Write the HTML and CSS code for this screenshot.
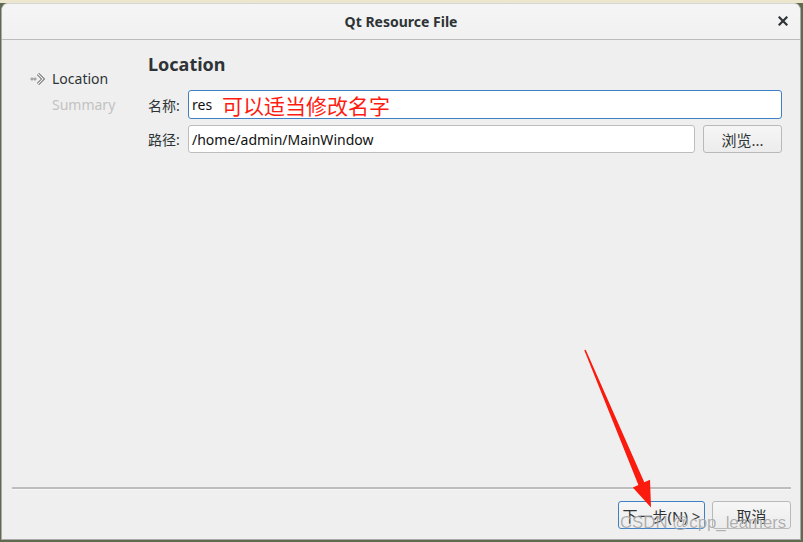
FILE: index.html
```html
<!DOCTYPE html>
<html>
<head>
<meta charset="utf-8">
<link rel="stylesheet" href="styles.css">
</head>
<body>
<div class="window">
  <div class="titlebar">
    <span class="title">Qt Resource File</span>
    <svg class="close" width="10" height="10" viewBox="0 0 10 10"><path d="M1.5 1.5 L8.5 8.5 M8.5 1.5 L1.5 8.5" stroke="#2e3436" stroke-width="2.2" stroke-linecap="square"/></svg>
  </div>
  <div class="body">
    <div class="content">
      <nav class="nav">
        <div class="nav-item current">
          <svg class="nav-icon" width="16" height="12" viewBox="0 0 16 12">
            <circle cx="2" cy="6" r="1.1" fill="none" stroke="#777" stroke-width="0.8"/>
            <circle cx="5" cy="6" r="1.1" fill="none" stroke="#777" stroke-width="0.8"/>
            <path d="M8 1 L13 6 L8 11" fill="none" stroke="#666" stroke-width="3"/>
            <path d="M8 1 L13 6 L8 11" fill="none" stroke="#efefef" stroke-width="1.2"/>
          </svg>
          <span>Location</span>
        </div>
        <div class="nav-item pending"><span>Summary</span></div>
      </nav>
      <main class="main">
        <h1 class="heading">Location</h1>
        <div class="form-row">
          <label class="label">名称:</label>
          <div class="input focused"><span>res</span><span class="note">可以适当修改名字</span></div>
        </div>
        <div class="form-row">
          <label class="label">路径:</label>
          <div class="input"><span>/home/admin/MainWindow</span></div>
          <button class="btn browse">浏览...</button>
        </div>
      </main>
    </div>
    <div class="footer">
      <div class="separator"></div>
      <div class="buttons">
        <button class="btn default">下一步(N) &gt;</button>
        <button class="btn cancel">取消</button>
      </div>
    </div>
  </div>
</div>
<svg class="arrow" width="803" height="542" viewBox="0 0 803 542">
  <polygon points="584.3,350.3 585.7,349.7 644.3,482.3 650,479.8 651,507.5 632.8,487.5 638.4,484.9" fill="#fa1a0e"/>
</svg>
<div class="watermark">CSDN @cpp_learners</div>
</body>
</html>
```
FILE: styles.css
```css
html, body {
  margin: 0;
  padding: 0;
}
body {
  width: 803px;
  height: 542px;
  background: #5e6b4e;
  position: relative;
  overflow: hidden;
  font-family: "Noto Sans", "Noto Sans CJK SC", sans-serif;
  color: #2e3436;
}
body::before {
  content: "";
  display: block;
  height: 3px;
  background: #ece6cf;
}
.window {
  margin-left: 1px;
  width: 800px;
  height: 537px;
  box-sizing: border-box;
  border: 1px solid #a9a9a9;
  border-top-color: #d6d6d6;
  border-radius: 7px 7px 0 0;
  background: #efefef;
  display: flex;
  flex-direction: column;
  overflow: hidden;
}
.titlebar {
  height: 35px;
  flex: none;
  border-bottom: 1px solid #bcbcbc;
  background: linear-gradient(#f5f5f5, #f1f1f1);
  display: flex;
  align-items: center;
  justify-content: center;
  position: relative;
}
.title {
  font-size: 14px;
  font-weight: bold;
  color: #2e3436;
}
.close {
  position: absolute;
  right: 12px;
  top: 12px;
}
.body {
  flex: 1;
  display: flex;
  flex-direction: column;
}
.content {
  flex: 1;
  display: flex;
}
.nav {
  width: 146px;
  flex: none;
  padding-top: 26px;
  padding-left: 28px;
  box-sizing: border-box;
}
.nav-item {
  height: 26px;
  display: flex;
  align-items: center;
  font-size: 14px;
  line-height: 20px;
}
.nav-item span {
  margin-left: 22px;
}
.nav-item.current span {
  margin-left: 6px;
  color: #2e3436;
}
.nav-icon {
  flex: none;
}
.nav-item.pending span {
  color: #c2c2c2;
}
.main {
  flex: 1;
  padding: 12px 18px 0 0;
}
.heading {
  margin: 0 0 14px 0;
  font-size: 18px;
  line-height: 24px;
  font-weight: bold;
  color: #2e3436;
}
.form-row {
  display: flex;
  align-items: center;
  margin-bottom: 6px;
}
.label {
  width: 40px;
  flex: none;
  font-size: 14px;
  color: #2e3436;
}
.input {
  flex: 1;
  height: 28px;
  box-sizing: border-box;
  border: 1px solid #bdbdbd;
  border-radius: 3px;
  background: #ffffff;
  display: flex;
  align-items: center;
  padding-left: 3px;
  font-size: 14px;
  color: #111;
}
.input.focused {
  border-color: #3f7fc3;
  height: 29px;
}
.note {
  color: #ff1b10;
  font-size: 21px;
  margin-left: 10px;
  font-family: "Noto Sans CJK SC", sans-serif;
  line-height: 26px;
}
.btn {
  height: 28px;
  box-sizing: border-box;
  border: 1px solid #b9b9b9;
  border-radius: 3px;
  background: linear-gradient(#f6f6f6, #ececec);
  font-family: "Noto Sans", "Noto Sans CJK SC", sans-serif;
  font-size: 15px;
  color: #2e3436;
  padding: 0;
}
.browse {
  width: 79px;
  margin-left: 8px;
}
.footer {
  flex: none;
  padding: 0 9px 10px 10px;
}
.separator {
  height: 2px;
  background: #bdbdbd;
  border-bottom: 1px solid #f7f7f7;
  margin-bottom: 11px;
}
.buttons {
  display: flex;
  justify-content: flex-end;
  gap: 7px;
}
.default {
  width: 87px;
  border-color: #3f7fc3;
}
.cancel {
  width: 79px;
}
.arrow {
  position: absolute;
  left: 0;
  top: 0;
  pointer-events: none;
}
.watermark {
  position: absolute;
  left: 620px;
  top: 513px;
  font-family: "Liberation Sans", sans-serif;
  font-size: 16.8px;
  color: rgba(110, 110, 110, 0.55);
  text-shadow: 0 0 1px rgba(255,255,255,0.8);
  pointer-events: none;
}
```
